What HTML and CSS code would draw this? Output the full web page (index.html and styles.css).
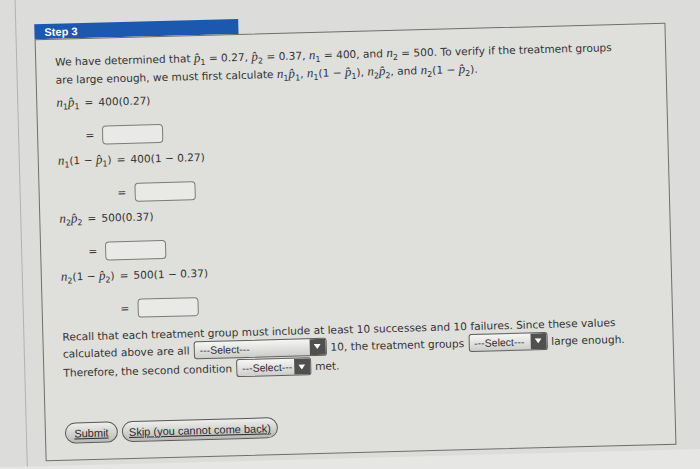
FILE: index.html
```html
<!DOCTYPE html>
<html lang="en">
<head>
<meta charset="utf-8">
<title>Step 3</title>
<link rel="stylesheet" href="styles.css">
</head>
<body>
<div class="viewport">
<div class="screen">
  <div class="frame">
    <div class="tab">Step 3</div>
    <div class="panel">
      <p class="intro">We have determined that <i class="v">p̂</i><sub>1</sub> = 0.27, <i class="v">p̂</i><sub>2</sub> = 0.37, <i class="v">n</i><sub>1</sub> = 400, and <i class="v">n</i><sub>2</sub> = 500. To verify if the treatment groups<br>are large enough, we must first calculate <i class="v">n</i><sub>1</sub><i class="v">p̂</i><sub>1</sub>, <i class="v">n</i><sub>1</sub>(1 − <i class="v">p̂</i><sub>1</sub>), <i class="v">n</i><sub>2</sub><i class="v">p̂</i><sub>2</sub>, and <i class="v">n</i><sub>2</sub>(1 − <i class="v">p̂</i><sub>2</sub>).</p>

      <div class="eq eq-first">
        <span class="lhs"><i class="v">n</i><sub>1</sub><i class="v">p̂</i><sub>1</sub></span><span class="eqs">=</span><span class="rhs">400(0.27)</span>
        <span class="lhs"></span><span class="eqs">=</span><span class="rhs"><span class="answer"></span></span>
      </div>

      <div class="eq">
        <span class="lhs"><i class="v">n</i><sub>1</sub>(1 − <i class="v">p̂</i><sub>1</sub>)</span><span class="eqs">=</span><span class="rhs">400(1 − 0.27)</span>
        <span class="lhs"></span><span class="eqs">=</span><span class="rhs"><span class="answer"></span></span>
      </div>

      <div class="eq">
        <span class="lhs"><i class="v">n</i><sub>2</sub><i class="v">p̂</i><sub>2</sub></span><span class="eqs">=</span><span class="rhs">500(0.37)</span>
        <span class="lhs"></span><span class="eqs">=</span><span class="rhs"><span class="answer"></span></span>
      </div>

      <div class="eq">
        <span class="lhs"><i class="v">n</i><sub>2</sub>(1 − <i class="v">p̂</i><sub>2</sub>)</span><span class="eqs">=</span><span class="rhs">500(1 − 0.37)</span>
        <span class="lhs"></span><span class="eqs">=</span><span class="rhs"><span class="answer"></span></span>
      </div>

      <div class="recall">
        <div class="line line-1">Recall that each treatment group must include at least 10 successes and 10 failures. Since these values</div>
        <div class="line">calculated above are all<span class="sel sel-wide"><span class="sel-label">---Select---</span><span class="sel-arrow"><svg width="7" height="5" viewBox="0 0 7 5"><path d="M0 0H7L3.5 5Z" fill="#fff"/></svg></span></span>10, the treatment groups<span class="sel sel-mid"><span class="sel-label">---Select---</span><span class="sel-arrow"><svg width="7" height="5" viewBox="0 0 7 5"><path d="M0 0H7L3.5 5Z" fill="#fff"/></svg></span></span>large enough.</div>
        <div class="line line-3">Therefore, the second condition<span class="sel sel-small"><span class="sel-label">---Select---</span><span class="sel-arrow"><svg width="7" height="5" viewBox="0 0 7 5"><path d="M0 0H7L3.5 5Z" fill="#fff"/></svg></span></span>met.</div>
      </div>

      <div class="actions">
        <span class="btn btn-submit">Submit</span>
        <span class="btn btn-skip">Skip (you cannot come back)</span>
      </div>
    </div>
  </div>
  <div class="strip"></div>
</div>
</div>
</body>
</html>
```

FILE: styles.css
```css
html, body {
  margin: 0;
  background: #dcdcda;
}

.viewport {
  width: 700px;
  height: 469px;
  overflow: hidden;
}

.screen {
  width: 740px;
  height: 540px;
  margin: -35px 0 0 -20px;
  background: #dcdcda;
  display: flex;
  flex-direction: column;
  transform: rotate(-1.5deg);
  transform-origin: 375px 276px;
  font-family: "DejaVu Sans", Verdana, sans-serif;
  font-size: 10.6px;
  color: #333333;
}

.frame {
  margin-left: 41px;
  border-left: 1px solid #b2b2b0;
  padding: 51px 0 5px 18px;
}

.strip {
  flex: 1;
  background: #e6e6e4;
}

.tab {
  width: 204px;
  height: 15px;
  box-sizing: border-box;
  padding-left: 10px;
  background: #1c58ad;
  color: #ffffff;
  font-family: "Liberation Sans", Arial, sans-serif;
  font-weight: bold;
  font-size: 11px;
  line-height: 16px;
}

.panel {
  width: 631px;
  box-sizing: border-box;
  border: 1px solid #6d6d6b;
  background: #dfdfdc;
  padding: 12.5px 0 16px 19px;
}

p {
  margin: 0;
}

.intro {
  line-height: 17px;
  white-space: nowrap;
}

.v {
  font-family: "Liberation Serif", "Times New Roman", serif;
  font-style: italic;
  font-size: 13px;
}

sub {
  font-size: 8px;
  line-height: 0;
  vertical-align: -3px;
}

.eq {
  display: grid;
  grid-template-columns: auto auto auto;
  grid-template-rows: 20px 20px;
  row-gap: 13px;
  justify-content: start;
  align-items: center;
  margin-top: 5px;
  line-height: 20px;
  white-space: nowrap;
}

.eq-first {
  margin-top: 4.5px;
}

.lhs {
  text-align: right;
}

.eqs {
  padding: 0 5px;
}

.rhs {
  display: flex;
  align-items: center;
}

.answer {
  display: block;
  width: 61px;
  height: 19px;
  box-sizing: border-box;
  margin-left: 3px;
  border: 1px solid #7b7b79;
  border-radius: 4px;
  background: #e9e9e7;
}

.recall {
  margin-top: 10.5px;
}

.line {
  display: flex;
  align-items: center;
  height: 20px;
  white-space: nowrap;
}

.line-1 {
  height: 13px;
}

.line-3 {
  height: 19px;
}

.sel {
  display: flex;
  height: 18px;
  box-sizing: border-box;
  margin: 0 4px;
  border: 1px solid #5e5e5e;
  border-radius: 3px;
  background: linear-gradient(#f6f6f4, #cdcdcb);
  overflow: hidden;
  font-family: "Liberation Sans", Arial, sans-serif;
  font-size: 10.5px;
  line-height: 16px;
  color: #2e2e2e;
}

.sel-wide { width: 133px; }
.sel-mid { width: 79px; }
.sel-small { width: 75px; }

.sel-label {
  flex: 1;
  padding-left: 5px;
}

.sel-arrow {
  width: 16px;
  display: flex;
  align-items: center;
  justify-content: center;
  background: #505050;
}

.actions {
  display: flex;
  gap: 4px;
  margin-top: 40.5px;
}

.btn {
  display: flex;
  align-items: center;
  justify-content: center;
  height: 21px;
  box-sizing: border-box;
  border: 1px solid #585858;
  border-radius: 11px;
  background: linear-gradient(#eeeeec, #b9b9b7);
  font-family: "Liberation Sans", Arial, sans-serif;
  font-size: 11px;
  color: #2a2a2a;
  text-decoration: underline;
}

.btn-submit { width: 53px; }
.btn-skip { width: 156px; }
```
